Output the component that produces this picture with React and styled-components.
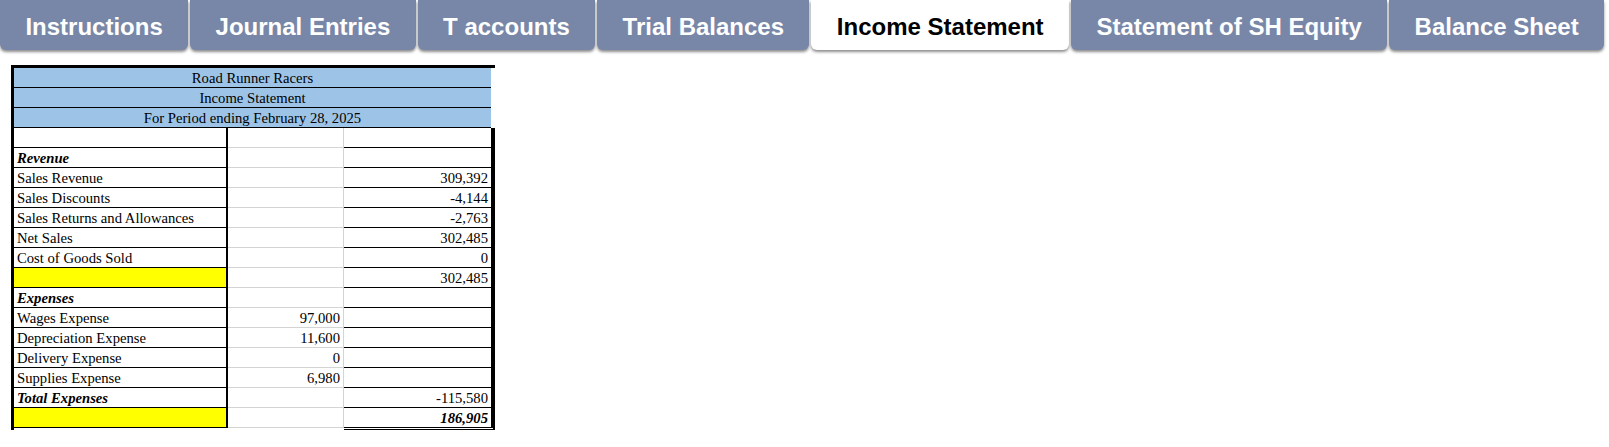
import styled, { createGlobalStyle } from 'styled-components'

const GlobalStyle = createGlobalStyle`
  html, body {
    margin: 0;
    padding: 0;
    background: #ffffff;
  }
  * {
    box-sizing: border-box;
  }
`

const tabs = [
  'Instructions',
  'Journal Entries',
  'T accounts',
  'Trial Balances',
  'Income Statement',
  'Statement of SH Equity',
  'Balance Sheet',
]

const rows = [
  { label: '' },
  { label: 'Revenue', strong: true },
  { label: 'Sales Revenue', amt: '309,392' },
  { label: 'Sales Discounts', amt: '-4,144' },
  { label: 'Sales Returns and Allowances', amt: '-2,763' },
  { label: 'Net Sales', amt: '302,485' },
  { label: 'Cost of Goods Sold', amt: '0' },
  { label: '', yellow: true, amt: '302,485' },
  { label: 'Expenses', strong: true },
  { label: 'Wages Expense', mid: '97,000' },
  { label: 'Depreciation Expense', mid: '11,600' },
  { label: 'Delivery Expense', mid: '0' },
  { label: 'Supplies Expense', mid: '6,980' },
  { label: 'Total Expenses', strong: true, amt: '-115,580' },
  { label: '', yellow: true, amt: '186,905', total: true },
]

export default function App() {
  return (
    <>
      <GlobalStyle />
      <TabBar>
        {tabs.map((t) => (
          <Tab key={t} $active={t === 'Income Statement'}>{t}</Tab>
        ))}
      </TabBar>
      <Sheet>
        <HeaderCell>Road Runner Racers</HeaderCell>
        <HeaderCell>Income Statement</HeaderCell>
        <HeaderCell>For Period ending February 28, 2025</HeaderCell>
        {rows.map((r, i) => (
          <Row key={i}>
            <LabelCell $strong={r.strong} $yellow={r.yellow}>{r.label}</LabelCell>
            <MidCell>{r.mid}</MidCell>
            <AmtCell $total={r.total}>{r.amt}</AmtCell>
          </Row>
        ))}
      </Sheet>
    </>
  )
}

const TabBar = styled.div`
  display: flex;
  gap: 2px;
  height: 50px;
  padding: 0 5px 0 0;
`

const Tab = styled.div`
  flex: 1 1 auto;
  display: flex;
  align-items: center;
  justify-content: center;
  padding: 4px 25px 0;
  height: 50px;
  border-radius: 0 0 6px 6px;
  background: ${(p) => (p.$active ? '#ffffff' : '#7887a8')};
  color: ${(p) => (p.$active ? '#000000' : '#ffffff')};
  box-shadow: 0 2px 3px rgba(0, 0, 0, 0.45);
  font-family: 'Liberation Sans', Arial, sans-serif;
  font-weight: bold;
  font-size: 24px;
  white-space: nowrap;
`

const Sheet = styled.div`
  display: grid;
  grid-template-columns: 214px 116px 151px;
  width: 484px;
  margin: 15px 0 0 11px;
  border-left: 3px solid #000000;
  border-top: 3px solid #000000;
  font-family: 'Liberation Serif', 'Times New Roman', serif;
  font-size: 11pt;
  color: #000000;
`

const Row = styled.div`
  display: contents;
`

const Cell = styled.div`
  height: 20px;
  line-height: 20px;
  white-space: nowrap;
  overflow: hidden;
`

const HeaderCell = styled(Cell)`
  grid-column: 1 / -1;
  margin-right: 4px;
  background: #9dc3e6;
  border-bottom: 1px solid #000000;
  text-align: center;
`

const LabelCell = styled(Cell)`
  padding-left: 3px;
  border-right: 2px solid #000000;
  border-bottom: 1px solid #000000;
  background: ${(p) => (p.$yellow ? '#ffff00' : '#ffffff')};
  font-weight: ${(p) => (p.$strong ? 'bold' : 'normal')};
  font-style: ${(p) => (p.$strong ? 'italic' : 'normal')};
`

const MidCell = styled(Cell)`
  padding-right: 3px;
  text-align: right;
  border-right: 1px solid #d4d4d4;
  border-bottom: 1px solid #d4d4d4;
`

const AmtCell = styled(Cell)`
  padding-right: 3px;
  text-align: right;
  border-right: 4px solid #000000;
  border-bottom: ${(p) => (p.$total ? '3px double #000000' : '1px solid #000000')};
  height: ${(p) => (p.$total ? '22px' : '20px')};
  font-weight: ${(p) => (p.$total ? 'bold' : 'normal')};
  font-style: ${(p) => (p.$total ? 'italic' : 'normal')};
`
